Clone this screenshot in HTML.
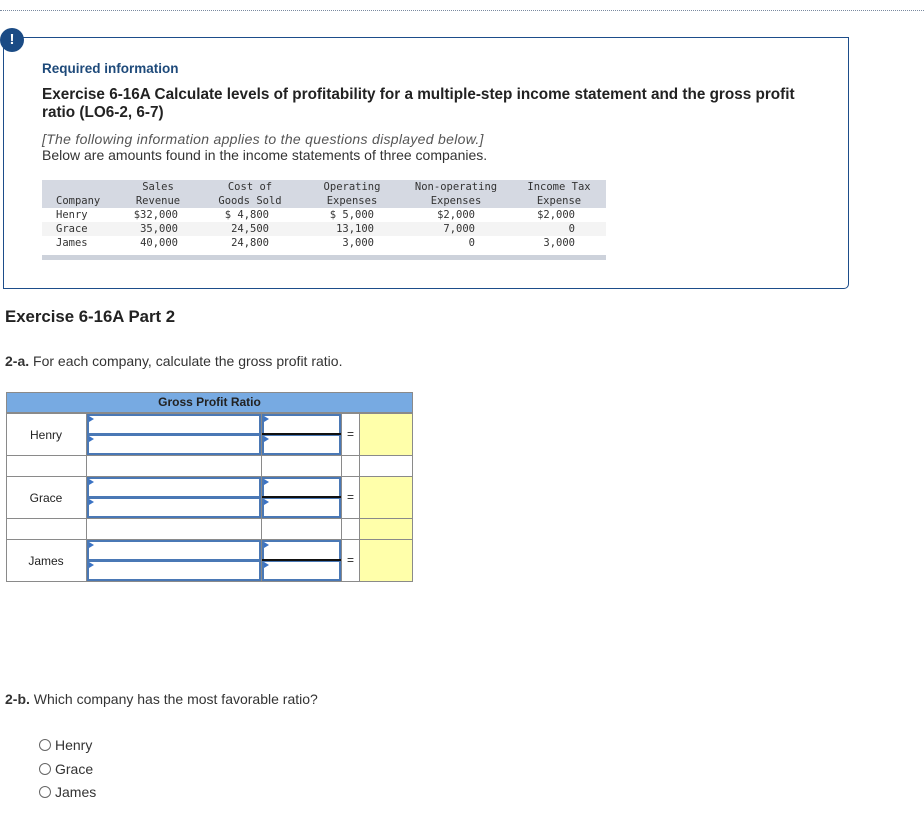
<!DOCTYPE html>
<html><head><meta charset="utf-8"><style>
body{margin:0;width:924px;height:829px;background:#fff;position:relative;font-family:"Liberation Sans",sans-serif;color:#222;overflow:hidden}
.a{position:absolute;white-space:nowrap}
.m{font-family:"DejaVu Sans Mono","Liberation Mono",monospace;font-size:10.5px;color:#333;line-height:14px}
.r{text-align:right}
.c{text-align:center}
.inp{position:absolute;box-sizing:border-box;border:2px solid #4a78b5;background:#fff}
.inp:before{content:"";position:absolute;left:0;top:0;border-left:5px solid #3b73c4;border-top:3px solid transparent;border-bottom:3px solid transparent}
.cell{position:absolute;box-sizing:border-box;border:1px solid #8a8a8a;background:#fff}
</style></head><body>
<div class="a" style="left:0;top:10px;width:924px;border-top:1px dotted #7a8aa0"></div>
<div class="a" style="left:3px;top:37px;width:844px;height:250px;border:1px solid #1d4d8a;border-radius:0 0 5px 0"></div>
<div class="a" style="left:0;top:28px;width:24px;height:24px;border-radius:12px;background:#1b4b85;color:#fff;font-weight:bold;font-size:15px;text-align:center;line-height:24px">!</div>
<div class="a" style="left:42px;top:61px;font-size:13.5px;font-weight:bold;color:#1e4a7a">Required information</div>
<div class="a" style="left:42px;top:86px;font-size:15.3px;font-weight:bold;color:#222;line-height:18px">Exercise 6-16A Calculate levels of profitability for a multiple-step income statement and the gross profit<br>ratio (LO6-2, 6-7)</div>
<div class="a" style="left:42px;top:131px;font-size:14px;font-style:italic;color:#555;letter-spacing:0.3px">[The following information applies to the questions displayed below.]</div>
<div class="a" style="left:42px;top:147px;font-size:14px;color:#333">Below are amounts found in the income statements of three companies.</div>

<div class="a" style="left:42px;top:180px;width:564px;height:28px;background:#d5d9e2"></div>
<div class="a" style="left:42px;top:222px;width:564px;height:14px;background:#f4f4f4"></div>
<div class="a" style="left:42px;top:255px;width:564px;height:5px;background:#cdd2db"></div>
<div class="a m" style="left:56px;top:194px">Company<br>Henry<br>Grace<br>James</div>
<div class="a m c" style="left:128px;top:180px;width:60px">Sales<br>Revenue</div>
<div class="a m r" style="left:118px;top:208px;width:60px">$32,000<br>35,000<br>40,000</div>
<div class="a m c" style="left:210px;top:180px;width:80px">Cost of<br>Goods Sold</div>
<div class="a m r" style="left:209px;top:208px;width:60px">$ 4,800<br>24,500<br>24,800</div>
<div class="a m c" style="left:312px;top:180px;width:80px">Operating<br>Expenses</div>
<div class="a m r" style="left:314px;top:208px;width:60px">$ 5,000<br>13,100<br>3,000</div>
<div class="a m c" style="left:406px;top:180px;width:100px">Non-operating<br>Expenses</div>
<div class="a m r" style="left:415px;top:208px;width:60px">$2,000<br>7,000<br>0</div>
<div class="a m c" style="left:519px;top:180px;width:80px">Income Tax<br>Expense</div>
<div class="a m r" style="left:515px;top:208px;width:60px">$2,000<br>0<br>3,000</div>

<div class="a" style="left:5px;top:307px;font-size:16.8px;font-weight:bold;color:#222">Exercise 6-16A Part 2</div>
<div class="a" style="left:5px;top:353px;font-size:14px;color:#333"><b>2-a.</b> For each company, calculate the gross profit ratio.</div>

<div class="a" style="left:6px;top:392px;width:407px;height:21px;box-sizing:border-box;background:#77aae2;border:1px solid #8a8a8a;font-size:12px;font-weight:bold;color:#222;text-align:center;line-height:19px">Gross Profit Ratio</div>

<div class="cell" style="left:6px;top:413px;width:81px;height:43px"></div>
<div class="cell" style="left:86px;top:413px;width:176px;height:43px"></div>
<div class="cell" style="left:261px;top:413px;width:81px;height:43px"></div>
<div class="cell" style="left:341px;top:413px;width:19px;height:43px"></div>
<div class="cell" style="left:359px;top:413px;width:54px;height:43px;background:#ffffaa"></div>
<div class="cell" style="left:6px;top:455px;width:81px;height:22px"></div>
<div class="cell" style="left:86px;top:455px;width:176px;height:22px"></div>
<div class="cell" style="left:261px;top:455px;width:81px;height:22px"></div>
<div class="cell" style="left:341px;top:455px;width:19px;height:22px"></div>
<div class="cell" style="left:359px;top:455px;width:54px;height:22px"></div>
<div class="cell" style="left:6px;top:476px;width:81px;height:43px"></div>
<div class="cell" style="left:86px;top:476px;width:176px;height:43px"></div>
<div class="cell" style="left:261px;top:476px;width:81px;height:43px"></div>
<div class="cell" style="left:341px;top:476px;width:19px;height:43px"></div>
<div class="cell" style="left:359px;top:476px;width:54px;height:43px;background:#ffffaa"></div>
<div class="cell" style="left:6px;top:518px;width:81px;height:22px"></div>
<div class="cell" style="left:86px;top:518px;width:176px;height:22px"></div>
<div class="cell" style="left:261px;top:518px;width:81px;height:22px"></div>
<div class="cell" style="left:341px;top:518px;width:19px;height:22px"></div>
<div class="cell" style="left:359px;top:518px;width:54px;height:22px;background:#ffffaa"></div>
<div class="cell" style="left:6px;top:539px;width:81px;height:43px"></div>
<div class="cell" style="left:86px;top:539px;width:176px;height:43px"></div>
<div class="cell" style="left:261px;top:539px;width:81px;height:43px"></div>
<div class="cell" style="left:341px;top:539px;width:19px;height:43px"></div>
<div class="cell" style="left:359px;top:539px;width:54px;height:43px;background:#ffffaa"></div>

<div class="a" style="left:6px;top:428px;width:80px;text-align:center;font-size:12px">Henry</div>
<div class="a" style="left:6px;top:491px;width:80px;text-align:center;font-size:12px">Grace</div>
<div class="a" style="left:6px;top:554px;width:80px;text-align:center;font-size:12px">James</div>

<div class="inp" style="left:87px;top:414px;width:174px;height:21px"></div>
<div class="inp" style="left:87px;top:434px;width:174px;height:21px"></div>
<div class="inp" style="left:262px;top:414px;width:79px;height:21px"></div>
<div class="inp" style="left:262px;top:434px;width:79px;height:21px"></div>
<div class="a" style="left:262px;top:433px;width:79px;height:2px;background:#111"></div>
<div class="inp" style="left:87px;top:477px;width:174px;height:21px"></div>
<div class="inp" style="left:87px;top:497px;width:174px;height:21px"></div>
<div class="inp" style="left:262px;top:477px;width:79px;height:21px"></div>
<div class="inp" style="left:262px;top:497px;width:79px;height:21px"></div>
<div class="a" style="left:262px;top:496px;width:79px;height:2px;background:#111"></div>
<div class="inp" style="left:87px;top:540px;width:174px;height:21px"></div>
<div class="inp" style="left:87px;top:560px;width:174px;height:21px"></div>
<div class="inp" style="left:262px;top:540px;width:79px;height:21px"></div>
<div class="inp" style="left:262px;top:560px;width:79px;height:21px"></div>
<div class="a" style="left:262px;top:559px;width:79px;height:2px;background:#111"></div>

<div class="a" style="left:341px;top:427px;width:19px;text-align:center;font-size:12px">=</div>
<div class="a" style="left:341px;top:490px;width:19px;text-align:center;font-size:12px">=</div>
<div class="a" style="left:341px;top:553px;width:19px;text-align:center;font-size:12px">=</div>

<div class="a" style="left:5px;top:691px;font-size:14px;color:#333"><b>2-b.</b> Which company has the most favorable ratio?</div>
<div class="a" style="left:39px;top:734px;font-size:14px;color:#333;line-height:23.5px">
<span style="display:inline-block;width:10px;height:10px;border:1px solid #666;border-radius:50%;vertical-align:-1px;margin-right:4px"></span>Henry<br>
<span style="display:inline-block;width:10px;height:10px;border:1px solid #666;border-radius:50%;vertical-align:-1px;margin-right:4px"></span>Grace<br>
<span style="display:inline-block;width:10px;height:10px;border:1px solid #666;border-radius:50%;vertical-align:-1px;margin-right:4px"></span>James</div>
</body></html>
